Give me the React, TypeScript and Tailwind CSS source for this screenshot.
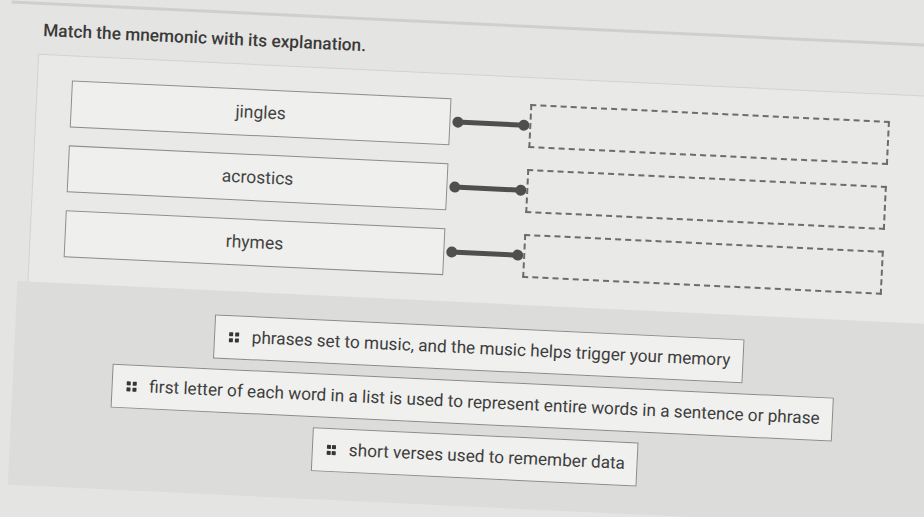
import React from 'react'

const SOURCES = ['jingles', 'acrostics', 'rhymes']

const ANSWERS = [
  'phrases set to music, and the music helps trigger your memory',
  'first letter of each word in a list is used to represent entire words in a sentence or phrase',
  'short verses used to remember data',
]

function DragHandle() {
  return (
    <div className="grid grid-cols-2 gap-[1.5px] w-[9.5px] shrink-0">
      <span className="w-[4px] h-[4px] bg-[#353535] rounded-[0.5px]" />
      <span className="w-[4px] h-[4px] bg-[#353535] rounded-[0.5px]" />
      <span className="w-[4px] h-[4px] bg-[#353535] rounded-[0.5px]" />
      <span className="w-[4px] h-[4px] bg-[#353535] rounded-[0.5px]" />
    </div>
  )
}

function Connector() {
  return (
    <div className="flex items-center ml-[2px] shrink-0">
      <span className="w-[11px] h-[11px] rounded-full bg-[#4f4f4f]" />
      <span className="w-[57px] h-[5px] -mx-[1px] bg-[#4f4f4f]" />
      <span className="w-[11px] h-[11px] rounded-full bg-[#4f4f4f]" />
    </div>
  )
}

function MatchRow({ label }: { label: string }) {
  return (
    <div className="flex items-center h-[47px]">
      <div className="w-[380px] h-[47px] shrink-0 flex items-center justify-center border-[1.5px] border-[#8d8d8b] bg-[#efefed] text-[17.5px] text-[#444]">
        {label}
      </div>
      <Connector />
      {/* empty drop target */}
      <div className="w-[360px] h-[44px] shrink-0 border-2 border-dashed border-[#6c6c6a]" />
    </div>
  )
}

function AnswerChip({ text }: { text: string }) {
  return (
    <div className="h-[44px] flex items-center gap-[13px] pl-[14px] pr-[12px] border-[1.5px] border-[#8a8a88] bg-[#f0f0ee] text-[17.2px] text-[#3d3d3d] whitespace-nowrap">
      <DragHandle />
      <span>{text}</span>
    </div>
  )
}

export default function App() {
  return (
    <div
      className="w-[924px] h-[517px] overflow-hidden bg-[#e4e4e2] relative"
      style={{ fontFamily: 'Roboto, "Noto Sans", Arial, sans-serif' }}
    >
      <div className="w-[924px] h-[517px] rotate-[2.7deg] origin-center flex flex-col">
        {/* top bar edge */}
        <div className="h-[25px] shrink-0 border-b-[3px] border-[#cfcfcd]" />

        <div className="pl-[33px] mt-[13px] h-[24px] leading-[24px] text-[17.3px] font-medium text-[#3a3a3a]">
          Match the mnemonic with its explanation.
        </div>

        <div className="ml-[29px] mt-[12px] w-[915px] border-t border-l border-[#d2d2d0] bg-[#e9e9e7]">
          <div className="pl-[34px] pt-[24px] pb-[26px] flex flex-col gap-[18px]">
            {SOURCES.map((s) => (
              <MatchRow key={s} label={s} />
            ))}
          </div>

          {/* answer bank */}
          <div className="-ml-[11px] w-[926px] bg-[#dcdcda] pt-[24px] pb-[28px] flex flex-col items-center gap-[10px]">
            <div className="ml-[2px]">
              <AnswerChip text={ANSWERS[0]} />
            </div>
            <div className="-ml-[6px]">
              <AnswerChip text={ANSWERS[1]} />
            </div>
            <div className="ml-[4px]">
              <AnswerChip text={ANSWERS[2]} />
            </div>
          </div>
        </div>
      </div>
    </div>
  )
}
